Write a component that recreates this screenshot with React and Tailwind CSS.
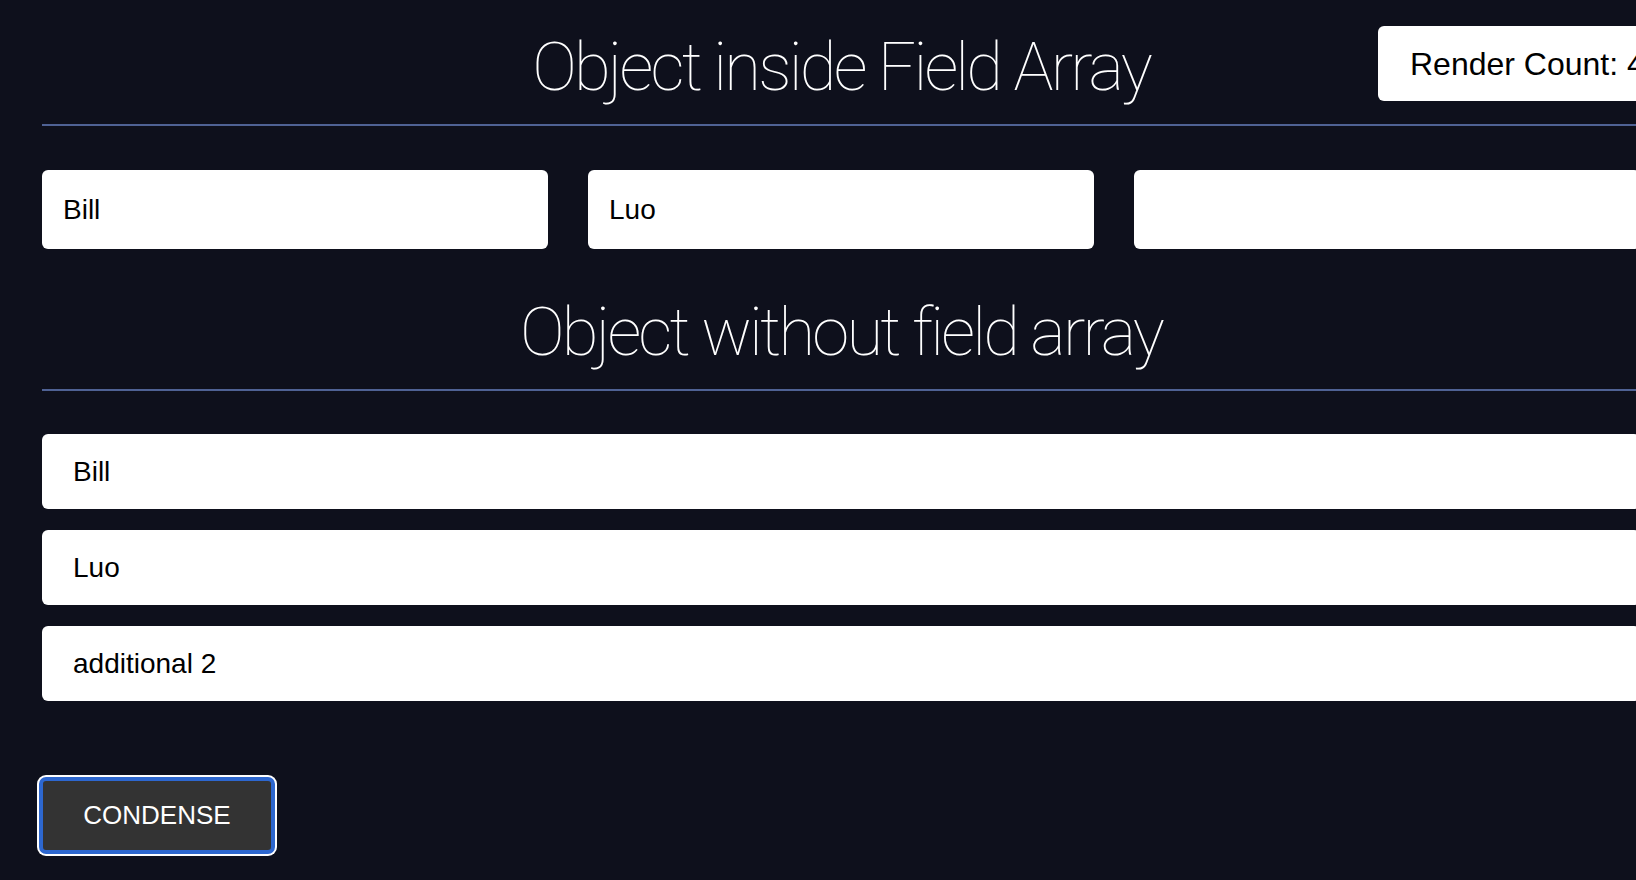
import React from 'react';

const FIELD_ARRAY = [
  { id: 'firstName', value: 'Bill' },
  { id: 'lastName', value: 'Luo' },
  { id: 'extra', value: '' },
];

const PLAIN_FIELDS = [
  { id: 'first', value: 'Bill' },
  { id: 'last', value: 'Luo' },
  { id: 'additional', value: 'additional 2' },
];

const inputFont = { fontFamily: '"Liberation Sans", Arial, sans-serif' };

function Heading({ children, className = '' }) {
  return (
    <h1
      className={`m-0 text-center text-white font-thin text-[67px] leading-[66px] tracking-[-2.8px] pb-[24px] border-b-2 border-[#4f6294] ${className}`}
      style={{ fontFamily: 'Roboto, "Helvetica Neue", sans-serif' }}
    >
      {children}
    </h1>
  );
}

export default function App() {
  return (
    <div className="min-h-screen w-full bg-[#0e101c] overflow-hidden">
      <div className="relative w-[1682px] px-[42px] pt-[34px] pb-[25px]" style={inputFont}>
        <div className="absolute top-[26px] left-[1378px] h-[75px] w-[300px] bg-white rounded-[6px] pl-[32px] flex items-center text-[32px] text-black">
          Render Count: 4
        </div>

        <Heading>Object inside Field Array</Heading>

        <div className="grid grid-cols-3 gap-[40px] mt-[44px]">
          {FIELD_ARRAY.map((f) => (
            <input
              key={f.id}
              readOnly
              value={f.value}
              className="h-[79px] w-full bg-white rounded-[6px] px-[21px] text-[28px] text-black outline-none"
              style={inputFont}
            />
          ))}
        </div>

        <Heading className="mt-[50px]">Object without field array</Heading>

        <div className="flex flex-col gap-[21px] mt-[43px]">
          {PLAIN_FIELDS.map((f) => (
            <input
              key={f.id}
              readOnly
              value={f.value}
              className="h-[75px] w-full bg-white rounded-[6px] px-[31px] text-[28px] text-black outline-none"
              style={inputFont}
            />
          ))}
        </div>

        <button
          type="button"
          className="mt-[76px] -ml-[3px] w-[236px] h-[77px] rounded-[7px] bg-[#333333] border-[4px] border-[#2d67cf] ring-2 ring-white text-white text-[26px] uppercase"
          style={inputFont}
        >
          Condense
        </button>
      </div>
    </div>
  );
}
